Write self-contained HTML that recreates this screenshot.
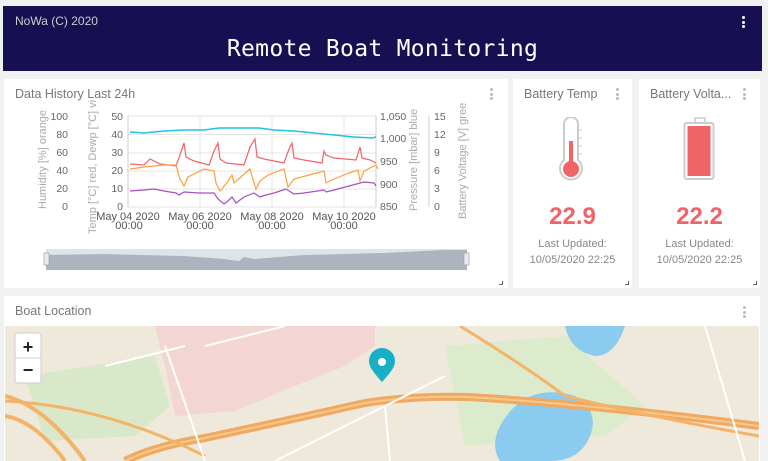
<!DOCTYPE html>
<html><head><meta charset="utf-8"><style>
*{margin:0;padding:0;box-sizing:border-box}
body{width:768px;height:461px;background:#f1f1f1;font-family:"Liberation Sans",sans-serif;overflow:hidden;position:relative}
.card{position:absolute;background:#fff;}
.t{position:absolute;color:#777;font-size:12.5px}
.dots{position:absolute;width:3px}
.dots i{display:block;width:3px;height:3px;border-radius:50%;background:#bbb;margin-bottom:1.5px}
.rs{position:absolute;width:4px;height:4px;border-right:1.5px solid #666;border-bottom:1.5px solid #666}
</style></head><body>
<div class="card" style="left:3px;top:6px;width:759px;height:65px;background:#160f52;overflow:hidden">
<div style="position:absolute;left:12px;top:8px;color:#ccc;font-size:12px">NoWa (C) 2020</div>
<div style="position:absolute;left:0;width:759px;text-align:center;top:30px;color:#fff;font-family:'DejaVu Sans Mono','Liberation Mono',monospace;font-size:23px;letter-spacing:0.3px">Remote Boat Monitoring</div>
<div class="dots" style="left:739px;top:10px"><i style="background:#fff"></i><i style="background:#fff"></i><i style="background:#fff"></i></div>
</div>

<div class="card" style="left:4px;top:79px;width:504px;height:209px">
<div class="t" style="left:11px;top:8px">Data History Last 24h</div>
<div class="dots" style="left:486px;top:9px"><i></i><i></i><i></i></div>
<div class="rs" style="left:495px;top:202px"></div>
</div>
<svg style="position:absolute;left:4px;top:79px" width="504" height="209" font-family="Liberation Sans" font-size="10.5" fill="#666">
<g stroke="#e6e6e6" stroke-width="1">
<line x1="124" y1="37" x2="372" y2="37"/><line x1="124" y1="55.5" x2="372" y2="55.5"/><line x1="124" y1="74" x2="372" y2="74"/><line x1="124" y1="92" x2="372" y2="92"/><line x1="124" y1="110" x2="372" y2="110"/><line x1="124" y1="128" x2="372" y2="128"/>
<line x1="196" y1="37" x2="196" y2="128"/><line x1="268" y1="37" x2="268" y2="128"/><line x1="340" y1="37" x2="340" y2="128"/>
</g>
<line x1="124" y1="37" x2="124" y2="128" stroke="#ccc"/><line x1="372" y1="37" x2="372" y2="128" stroke="#ccc"/><line x1="425" y1="37" x2="425" y2="128" stroke="#ccc"/>
<g text-anchor="end"><text x="64" y="41">100</text><text x="64" y="59">80</text><text x="64" y="77">60</text><text x="64" y="95">40</text><text x="64" y="113">20</text><text x="64" y="131">0</text>
<text x="119" y="41">50</text><text x="119" y="59">40</text><text x="119" y="77">30</text><text x="119" y="95">20</text><text x="119" y="113">10</text><text x="119" y="131">0</text></g>
<g><text x="376" y="41">1,050</text><text x="376" y="63">1,000</text><text x="376" y="86">950</text><text x="376" y="109">900</text><text x="376" y="131">850</text>
<text x="430" y="41">15</text><text x="430" y="59">12</text><text x="430" y="77">9</text><text x="430" y="95">6</text><text x="430" y="113">3</text><text x="430" y="131">0</text></g>
<g fill="#aaa" font-size="11"><text transform="translate(42,130) rotate(-90)">Humidity [%] orange</text>
<text transform="translate(92,155) rotate(-90)">Temp [°C] red, Dewp [°C] vi</text>
<text transform="translate(413,132) rotate(-90)">Pressure  [mbar] blue</text>
<text transform="translate(462,140) rotate(-90)">Battery Voltage [V] gree</text></g>
<g text-anchor="middle" fill="#555" font-size="11"><text x="124" y="141">May 04 2020</text><text x="125" y="150">00:00</text><text x="196" y="141">May 06 2020</text><text x="196" y="150">00:00</text><text x="268" y="141">May 08 2020</text><text x="268" y="150">00:00</text><text x="340" y="141">May 10 2020</text><text x="340" y="150">00:00</text></g>
<polyline fill="none" stroke="#22c3de" stroke-width="1.5" points="126,53 140,54 160,52 180,51 200,51 215,49 235,49 255,49 270,51 290,52 310,54 330,56 350,58 368,59 372,58"/>
<polyline fill="none" stroke="#f06468" stroke-width="1.2" points="126,85 140,86 146,80 156,85 172,87 178,70 180,64 182,78 190,82 205,86 210,72 214,64 216,80 222,84 240,86 246,68 251,60 253,78 260,80 280,84 285,70 288,64 290,79 300,81 318,84 320,72 322,76 330,79 352,81 356,68 358,79 366,81 372,84"/>
<polyline fill="none" stroke="#ffa03c" stroke-width="1.2" points="126,90 140,88 160,86 172,86 176,100 180,107 184,98 200,90 210,92 212,104 216,112 222,105 228,96 230,104 246,90 250,104 252,110 256,102 264,96 280,90 284,108 290,100 305,96 320,92 322,104 330,100 345,94 354,91 356,102 360,92 372,86 374,90"/>
<polyline fill="none" stroke="#a550c0" stroke-width="1.2" points="126,112 140,111 150,110 160,112 172,114 175,116 180,113 195,114 210,114 214,120 220,125 224,122 228,118 232,124 240,118 250,114 256,118 262,116 270,114 282,110 290,115 300,114 320,111 322,113 330,111 345,107 360,103 370,104 372,107"/>
<rect x="42" y="170" width="421" height="21" fill="#dfe3ec"/>
<path d="M42 191 L42 176 L100 175 L180 177 L220 180 L235 182 L240 178 L250 180 L300 176 L380 174 L440 171 L463 171 L463 191 Z" fill="#aeb4bf"/>
<rect x="40" y="174" width="5" height="12" fill="#e8eaef" stroke="#999" stroke-width="0.6"/><rect x="460" y="174" width="5" height="12" fill="#e8eaef" stroke="#999" stroke-width="0.6"/>
</svg>

<div class="card" style="left:513px;top:79px;width:119px;height:209px">
<div class="t" style="left:11px;top:8px">Battery Temp</div>
<div class="dots" style="left:103px;top:9px"><i></i><i></i><i></i></div>
<svg style="position:absolute;left:42px;top:38px" width="34" height="66"><path d="M9 7a7 7 0 0 1 14 0v36a11 11 0 1 1 -14 0z" fill="none" stroke="#ccc" stroke-width="2"/><rect x="14" y="24" width="4" height="26" fill="#f06468"/><circle cx="16" cy="52" r="8" fill="#f06468"/><g stroke="#ccc"><line x1="23" y1="13" x2="27" y2="13"/><line x1="23" y1="21" x2="27" y2="21"/><line x1="23" y1="29" x2="27" y2="29"/><line x1="23" y1="37" x2="27" y2="37"/></g></svg>
<div style="position:absolute;width:119px;text-align:center;top:124px;color:#f06468;font-weight:bold;font-size:24px">22.9</div>
<div style="position:absolute;width:119px;text-align:center;top:157px;color:#888;font-size:11px;line-height:16px">Last Updated:<br>10/05/2020 22:25</div>
<div class="rs" style="left:112px;top:202px"></div>
</div>

<div class="card" style="left:639px;top:79px;width:121px;height:209px">
<div class="t" style="left:11px;top:8px">Battery Volta...</div>
<div class="dots" style="left:104px;top:9px"><i></i><i></i><i></i></div>
<svg style="position:absolute;left:44px;top:38px" width="34" height="64"><rect x="12" y="1" width="10" height="5" fill="none" stroke="#ccc" stroke-width="1.5"/><rect x="1.5" y="6" width="29" height="56" rx="2" fill="none" stroke="#ccc" stroke-width="2"/><rect x="4.5" y="9" width="23" height="50" fill="#f06468"/></svg>
<div style="position:absolute;width:121px;text-align:center;top:124px;color:#f06468;font-weight:bold;font-size:24px">22.2</div>
<div style="position:absolute;width:121px;text-align:center;top:157px;color:#888;font-size:11px;line-height:16px">Last Updated:<br>10/05/2020 22:25</div>
<div class="rs" style="left:114px;top:202px"></div>
</div>

<div class="card" style="left:4px;top:296px;width:756px;height:165px">
<div class="t" style="left:11px;top:8px">Boat Location</div>
<div class="dots" style="left:739px;top:10px"><i></i><i></i><i></i></div>
</div>
<svg style="position:absolute;left:5px;top:326px" width="754" height="135">
<rect width="754" height="135" fill="#efe9db"/>
<path d="M150 0 H370 V20 L340 40 L290 60 L230 85 L170 90 L160 40 Z" fill="#f3d6d3"/>
<path d="M20 50 L150 30 L165 80 L130 110 L40 115 Z" fill="#d9e8c9"/>
<path d="M440 20 L560 10 L640 80 L600 110 L460 120 Z" fill="#dcebcc"/>
<path d="M560 0 H620 Q610 30 590 30 Q565 25 560 0 Z" fill="#8ccbf0"/>
<path d="M495 100 Q520 55 570 70 Q595 85 585 110 Q575 135 545 135 H495 Q485 120 495 100 Z" fill="#8ccbf0"/>
<path d="M0 70 Q40 80 80 135 M0 90 Q30 95 60 135" stroke="#f3b46a" stroke-width="4" fill="none"/>
<path d="M120 135 Q150 120 200 112 Q280 95 360 77 Q420 68 480 72 Q600 80 754 100" stroke="#f1a860" stroke-width="8" fill="none"/>
<path d="M120 135 Q150 120 200 112 Q280 95 360 77 Q420 68 480 72 Q600 80 754 100" stroke="#f6c98c" stroke-width="2" fill="none"/>
<path d="M455 0 Q520 40 560 70 Q640 90 754 110" stroke="#f3b46a" stroke-width="3" fill="none"/>
<path d="M0 75 Q100 80 200 130" stroke="#f3b46a" stroke-width="3" fill="none"/>
<path d="M200 20 L280 0 M100 40 L180 20 M380 80 L385 135 M160 20 L200 135 M270 135 L440 50 M700 0 L740 135" stroke="#fff" stroke-width="2" fill="none"/>
<path d="M377 56 C367 45 364 40 364 35 A13 13 0 0 1 390 35 C390 40 387 45 377 56 Z" fill="#17b0c6"/><circle cx="377" cy="36" r="4" fill="#fff"/>
<rect x="10" y="7" width="26" height="50" rx="3" fill="#fff" stroke="#ccc"/><line x1="10" y1="32" x2="36" y2="32" stroke="#ccc"/>
<text x="23" y="27" text-anchor="middle" font-family="Liberation Sans" font-size="18" font-weight="bold" fill="#222">+</text>
<text x="23" y="50" text-anchor="middle" font-family="Liberation Sans" font-size="18" font-weight="bold" fill="#222">−</text>
</svg>
</body></html>
